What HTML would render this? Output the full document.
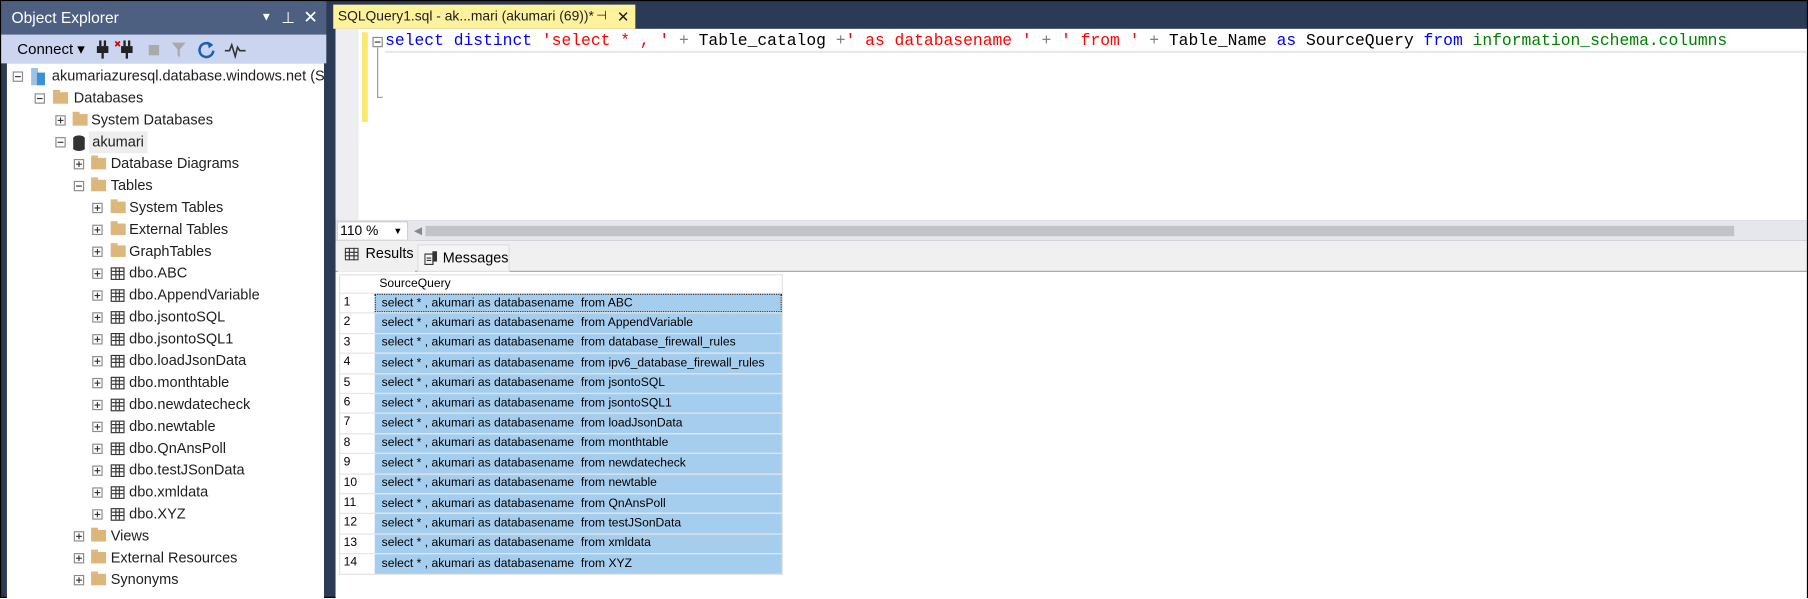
<!DOCTYPE html>
<html><head><meta charset="utf-8"><style>
*{margin:0;padding:0;box-sizing:border-box}
html,body{width:1808px;height:598px;overflow:hidden;background:#fff}
#w{position:absolute;left:0;top:0;width:1568px;height:519px;transform:scale(1.15306,1.1522);transform-origin:0 0;font-family:"Liberation Sans",sans-serif;background:#2b3a55;border:1px solid #000}
.abs{position:absolute}
#oeh{left:0;top:0;width:282px;height:29px;background:#4d6082;color:#fff;font-size:13.5px;line-height:29px;padding-left:9px}
#tb{left:0;top:29px;width:282px;height:25px;background:#ccd5f0;font-size:13px;line-height:25px}
#tree{left:5px;top:54px;width:275px;height:465px;background:#fff}
.r{position:absolute;height:19px;line-height:19px;font-size:12.6px;color:#1e1e1e;white-space:nowrap}
.ex{position:absolute;top:5px;width:9px;height:9px;border:1px solid #8a8a8a;background:#fff}
.ex:before{content:"";position:absolute;left:1px;top:3px;width:5px;height:1px;background:#333}
.ex.p:after{content:"";position:absolute;left:3px;top:1px;width:1px;height:5px;background:#333}
.fo{position:absolute;top:4px;width:13px;height:10px;background:#dcb67a}
.fo:before{content:"";position:absolute;left:0;top:-2px;width:6px;height:2px;background:#dcb67a}
.tbi{position:absolute;top:4px;width:12px;height:11px;border:1px solid #333;background:linear-gradient(#333,#333) 0 2px/100% 1px no-repeat,linear-gradient(#333,#333) 0 5px/100% 1px no-repeat,linear-gradient(#333,#333) 3px 0/1px 100% no-repeat,linear-gradient(#333,#333) 6px 0/1px 100% no-repeat;}
.t{position:absolute}
#tab{left:288px;top:3px;width:262px;height:21px;background:#fff29d;font-size:12px;line-height:21px;padding-left:4px;color:#1e1e1e}
#ed{left:290px;top:24px;width:1276px;height:166px;background:#fff}
#mg{left:290px;top:24px;width:20px;height:166px;background:#eeeef2}
#code{left:333px;top:27px;font-family:"Liberation Mono",monospace;font-size:14.17px;line-height:17px;white-space:pre;color:#000}
.k{color:#0000ff}.s{color:#ff0000}.g{color:#808080}.n{color:#008000}
#zb{left:290px;top:190px;width:1276px;height:18px;background:#e6e7ed}
#rt{left:290px;top:208px;width:1276px;height:27px;background:#f0f0f0;border-bottom:1px solid #a0a0a0}
#res{left:290px;top:235px;width:1276px;height:283px;background:#fff}
.gr{position:absolute;font-size:10.5px;line-height:17px;color:#000;white-space:nowrap}
</style></head><body><div id="w">
<div id="oeh" class="abs">Object Explorer<span style="position:absolute;left:225px;font-size:10px">▼</span><span style="position:absolute;left:243px">⊥</span><span style="position:absolute;left:262px;font-size:15px">✕</span></div>
<div id="tb" class="abs"><span style="position:absolute;left:14px">Connect ▾</span>
<svg class="abs" style="left:82px;top:5px" width="140" height="16" viewBox="0 0 140 16">
<g fill="#222"><rect x="3" y="0" width="2" height="5"/><rect x="7" y="0" width="2" height="5"/><rect x="1" y="5" width="10" height="6"/><rect x="5" y="11" width="2" height="5"/></g>
<g fill="#222"><rect x="24" y="0" width="2" height="5"/><rect x="28" y="0" width="2" height="5"/><rect x="22" y="5" width="10" height="6"/><rect x="26" y="11" width="2" height="5"/></g>
<path d="M17 1l4 4M21 1l-4 4" stroke="#d00" stroke-width="1.5"/>
<rect x="46" y="4" width="9" height="9" fill="#aaa"/>
<path d="M66 2h12l-5 6v7l-2-2v-5z" fill="#aaa"/>
<path d="M100 4a6 6 0 1 0 2 5" fill="none" stroke="#1e5fb4" stroke-width="2.2"/><path d="M97 1l5 3-4 3z" fill="#1e5fb4"/>
<path d="M112 9h4l2-5 3 10 2-8 2 3h5" fill="none" stroke="#333" stroke-width="1.4"/>
</svg></div>
<div id="tree" class="abs">
<div class="r" style="left:0;top:2px"><span class="ex" style="left:5px"></span><svg class="t" style="left:20px;top:1px" width="14" height="17"><rect x="1" y="1" width="6" height="15" fill="#9cc3e6"/><rect x="6" y="5" width="7" height="11" fill="#3a8fd6"/></svg><span class="t" style="left:39px">akumariazuresql.database.windows.net (S</span></div>
<div class="r" style="left:0;top:21px"><span class="ex" style="left:24px"></span><span class="fo" style="left:40px"></span><span class="t" style="left:58px">Databases</span></div>
<div class="r" style="left:0;top:40px"><span class="ex p" style="left:42px"></span><span class="fo" style="left:57px"></span><span class="t" style="left:73px">System Databases</span></div>
<div class="r" style="left:0;top:59px"><span class="ex" style="left:42px"></span><svg class="t" style="left:57px;top:3px" width="11" height="14"><ellipse cx="5.5" cy="3" rx="5" ry="2.5" fill="#333"/><rect x="0.5" y="3" width="10" height="9" fill="#333"/><ellipse cx="5.5" cy="12" rx="5" ry="2" fill="#333"/></svg><span class="t" style="left:71px;background:#eee;padding:0 3px">akumari</span></div>
<div class="r" style="left:0;top:78px"><span class="ex p" style="left:58px"></span><span class="fo" style="left:73px"></span><span class="t" style="left:90px">Database Diagrams</span></div>
<div class="r" style="left:0;top:97px"><span class="ex" style="left:58px"></span><span class="fo" style="left:73px"></span><span class="t" style="left:90px">Tables</span></div>
<div class="r" style="left:0;top:116px"><span class="ex p" style="left:74px"></span><span class="fo" style="left:90px"></span><span class="t" style="left:106px">System Tables</span></div>
<div class="r" style="left:0;top:135px"><span class="ex p" style="left:74px"></span><span class="fo" style="left:90px"></span><span class="t" style="left:106px">External Tables</span></div>
<div class="r" style="left:0;top:154px"><span class="ex p" style="left:74px"></span><span class="fo" style="left:90px"></span><span class="t" style="left:106px">GraphTables</span></div>
<div class="r" style="left:0;top:173px"><span class="ex p" style="left:74px"></span><span class="tbi" style="left:90px"></span><span class="t" style="left:106px">dbo.ABC</span></div>
<div class="r" style="left:0;top:192px"><span class="ex p" style="left:74px"></span><span class="tbi" style="left:90px"></span><span class="t" style="left:106px">dbo.AppendVariable</span></div>
<div class="r" style="left:0;top:211px"><span class="ex p" style="left:74px"></span><span class="tbi" style="left:90px"></span><span class="t" style="left:106px">dbo.jsontoSQL</span></div>
<div class="r" style="left:0;top:230px"><span class="ex p" style="left:74px"></span><span class="tbi" style="left:90px"></span><span class="t" style="left:106px">dbo.jsontoSQL1</span></div>
<div class="r" style="left:0;top:249px"><span class="ex p" style="left:74px"></span><span class="tbi" style="left:90px"></span><span class="t" style="left:106px">dbo.loadJsonData</span></div>
<div class="r" style="left:0;top:268px"><span class="ex p" style="left:74px"></span><span class="tbi" style="left:90px"></span><span class="t" style="left:106px">dbo.monthtable</span></div>
<div class="r" style="left:0;top:287px"><span class="ex p" style="left:74px"></span><span class="tbi" style="left:90px"></span><span class="t" style="left:106px">dbo.newdatecheck</span></div>
<div class="r" style="left:0;top:306px"><span class="ex p" style="left:74px"></span><span class="tbi" style="left:90px"></span><span class="t" style="left:106px">dbo.newtable</span></div>
<div class="r" style="left:0;top:325px"><span class="ex p" style="left:74px"></span><span class="tbi" style="left:90px"></span><span class="t" style="left:106px">dbo.QnAnsPoll</span></div>
<div class="r" style="left:0;top:344px"><span class="ex p" style="left:74px"></span><span class="tbi" style="left:90px"></span><span class="t" style="left:106px">dbo.testJSonData</span></div>
<div class="r" style="left:0;top:363px"><span class="ex p" style="left:74px"></span><span class="tbi" style="left:90px"></span><span class="t" style="left:106px">dbo.xmldata</span></div>
<div class="r" style="left:0;top:382px"><span class="ex p" style="left:74px"></span><span class="tbi" style="left:90px"></span><span class="t" style="left:106px">dbo.XYZ</span></div>
<div class="r" style="left:0;top:401px"><span class="ex p" style="left:58px"></span><span class="fo" style="left:73px"></span><span class="t" style="left:90px">Views</span></div>
<div class="r" style="left:0;top:420px"><span class="ex p" style="left:58px"></span><span class="fo" style="left:73px"></span><span class="t" style="left:90px">External Resources</span></div>
<div class="r" style="left:0;top:439px"><span class="ex p" style="left:58px"></span><span class="fo" style="left:73px"></span><span class="t" style="left:90px">Synonyms</span></div>
</div>
<div id="tab" class="abs">SQLQuery1.sql - ak...mari (akumari (69))*<span style="position:absolute;left:228px;font-size:11px">⊣</span><span style="position:absolute;left:246px;font-size:13px">✕</span></div>
<div id="ed" class="abs"></div>
<div id="mg" class="abs"></div>
<div class="abs" style="left:313px;top:27px;width:5px;height:78px;background:#fbe96b"></div>
<div class="abs" style="left:333px;top:27px;width:1233px;height:18px;background:#fff;border-bottom:2px solid #e8e8f0"></div>
<div class="abs" style="left:322px;top:31px;width:9px;height:9px;border:1px solid #888;background:#fff"><div style="position:absolute;left:1px;top:3px;width:5px;height:1px;background:#333"></div></div>
<div class="abs" style="left:326px;top:40px;width:5px;height:44px;border-left:1px solid #999;border-bottom:1px solid #999"></div>
<div id="code" class="abs"><span class="k">select distinct</span> <span class="s">'select * , '</span> <span class="g">+</span> Table_catalog <span class="g">+</span><span class="s">' as databasename '</span> <span class="g">+</span> <span class="s">' from '</span> <span class="g">+</span> Table_Name <span class="k">as</span> SourceQuery <span class="k">from</span> <span class="n">information_schema.columns</span></div>
<div id="zb" class="abs"><div style="position:absolute;left:1px;top:1px;width:62px;height:17px;background:#fff;border:1px solid #ccc;font-size:12px;line-height:15px;padding-left:2px">110 %<span style="position:absolute;right:4px;font-size:8px">▼</span></div><div style="position:absolute;left:68px;top:4px;font-size:9px;color:#888">◀</div><div style="position:absolute;left:78px;top:5px;width:1135px;height:9px;background:#c2c3c9"></div></div>
<div id="rt" class="abs"><div style="position:absolute;left:2px;top:0;width:67px;height:27px;background:#f0f0f0;font-size:12.5px;line-height:22px;padding-left:24px">Results<svg style="position:absolute;left:6px;top:6px" width="12" height="11"><rect x=".5" y=".5" width="11" height="10" fill="none" stroke="#333"/><path d="M0 4h12M0 7h12M4 0v11M8 0v11" stroke="#333"/></svg></div><div style="position:absolute;left:71px;top:3px;width:80px;height:24px;background:#f5f5f5;border:1px solid #ddd;font-size:12.5px;line-height:22px;padding-left:21px">Messages<svg style="position:absolute;left:5px;top:5px" width="12" height="12"><rect x=".5" y="2.5" width="7" height="9" fill="none" stroke="#333"/><rect x="7" y="0" width="4" height="9" fill="#333"/><path d="M2 6h4M2 8h4" stroke="#333"/></svg></div></div>
<div id="res" class="abs">
<div class="abs" style="left:3px;top:2px;width:385px;height:261px;background:#fff;border:1px solid #e2e2e2"></div>
<div class="gr" style="left:38px;top:2px">SourceQuery</div>
<div id="rows"></div>
</div>
<script>
var n=["ABC","AppendVariable","database_firewall_rules","ipv6_database_firewall_rules","jsontoSQL","jsontoSQL1","loadJsonData","monthtable","newdatecheck","newtable","QnAnsPoll","testJSonData","xmldata","XYZ"],h="";
for(var i=0;i<14;i++){var y=18+i*17.4;h+='<div class="abs" style="left:3px;top:'+y+'px;width:385px;height:1px;background:#e4e4e4"></div><div class="gr" style="left:7px;top:'+y+'px">'+(i+1)+'</div><div class="abs" style="left:34px;top:'+(y+1)+'px;width:353px;height:16.4px;background:#a5cdee;'+(i==0?'outline:1px dotted #333;outline-offset:-1px':'')+'"></div><div class="gr" style="left:40px;top:'+(y+0.5)+'px">select * , akumari as databasename&nbsp; from '+n[i]+'</div>';}
document.getElementById('rows').innerHTML=h;
</script>
</div></body></html>
